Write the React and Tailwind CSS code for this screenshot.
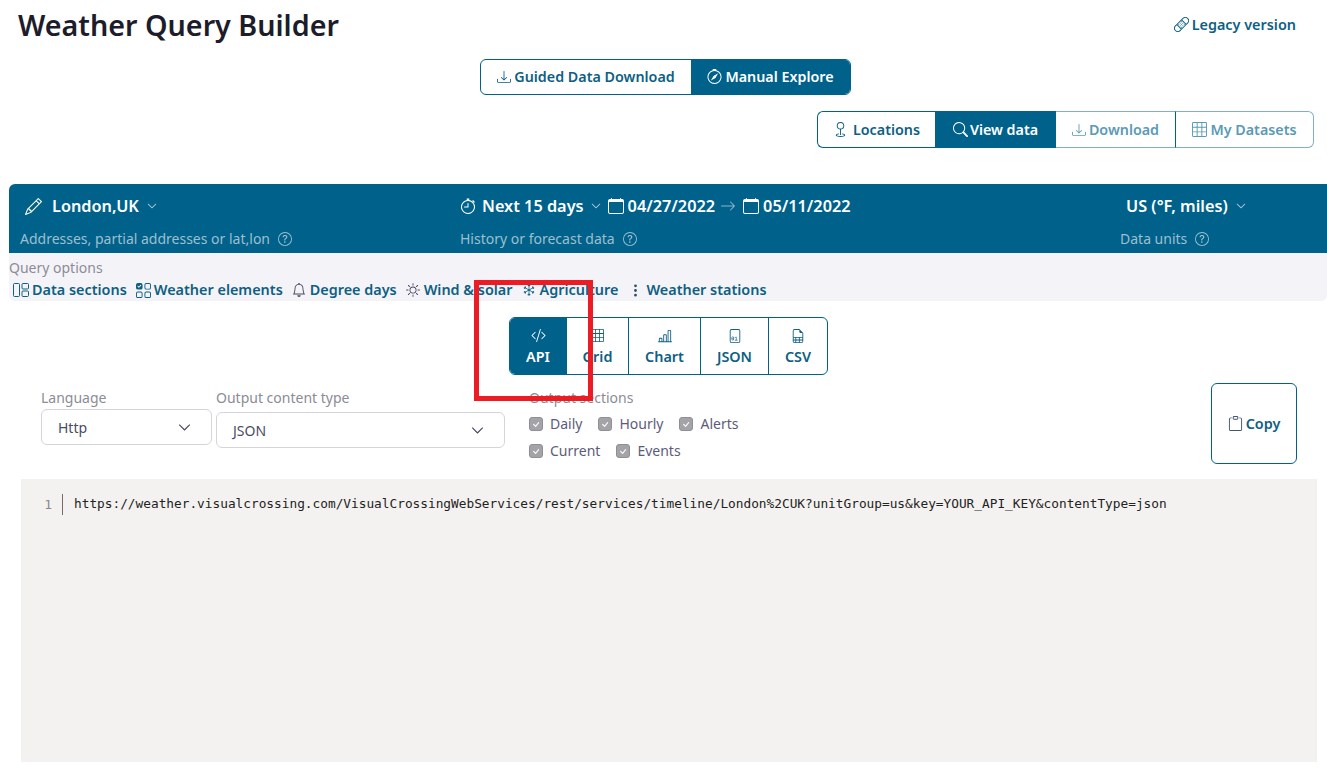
import React from "react";
import {
  BsBandaid, BsDownload, BsCompass, BsGeo, BsSearch, BsGrid3X3, BsPencil, BsChevronDown,
  BsQuestionCircle, BsStopwatch, BsCalendar, BsArrowRight, BsUiChecksGrid, BsBell, BsSun,
  BsSnow, BsThreeDotsVertical, BsCodeSlash, BsBarChartLine, BsFileBinary, BsFileEarmarkSpreadsheet, BsClipboard, BsCheck,
} from "react-icons/bs";

const SectionsIcon = () => (
  <svg width="16" height="16" viewBox="0 0 16 16" fill="none" stroke="currentColor" strokeWidth="1">
    <rect x="0.5" y="1.5" width="6" height="13" rx="1" />
    <rect x="9" y="1.5" width="6.5" height="5.5" rx="1" />
    <rect x="9" y="9" width="6.5" height="5.5" rx="1" />
  </svg>
);

const Check = ({ label }) => (
  <span className="flex items-center">
    <span className="w-[14px] h-[14px] rounded-[3px] bg-[#a3a3a8] border border-[#8f8f94] flex items-center justify-center text-white">
      <BsCheck size={13} />
    </span>
    <span className="ml-[7px] text-[14px] leading-[20px] text-[#5c5c7a]">{label}</span>
  </span>
);

const Select = ({ value, className }) => (
  <div className={`h-[36px] bg-white border border-[#d4d4de] rounded-[6px] flex items-center justify-between pl-4 pr-[20px] text-[14px] text-[#4b4b63] ${className}`}>
    <span>{value}</span>
    <BsChevronDown size={13} className="text-[#45455c] stroke-[0.6px]" />
  </div>
);

const Opt = ({ icon, label, className = "" }) => (
  <span className={`flex items-center gap-[3px] ${className}`}>
    {icon}
    <span>{label}</span>
  </span>
);

const Tab = ({ icon, label, active, className }) => (
  <div className={`flex flex-col items-center justify-center h-full ${className} ${active ? "bg-[#00628b] text-white" : "text-[#0e5f83] border-l border-[#00628b]"}`}>
    <span className="h-[16px] mt-[2px] flex items-center">{icon}</span>
    <span className="mt-[3px] text-[14.4px] leading-[20px] font-semibold">{label}</span>
  </div>
);

export default function App() {
  return (
    <div className="relative w-[1327px] h-[777px] overflow-hidden bg-white font-['Noto_Sans',sans-serif]">
      <div className="flex items-center justify-between pl-[18px] pr-[31px] h-[49px]">
        <h1 className="text-[28.7px] leading-[38px] font-semibold text-[#1c1c2b]">Weather Query Builder</h1>
        <a className="flex items-center gap-[3px] text-[14.4px] font-semibold text-[#0e5f83]">
          <BsBandaid size={15} /> Legacy version
        </a>
      </div>

      <div className="flex justify-center mt-[10px] pl-[3px]">
        <div className="flex h-[36px] w-[371px] border border-[#00628b] rounded-[6px] overflow-hidden text-[14.3px] leading-[20px] font-semibold">
          <div className="w-[210px] pb-[1px] pl-[1px] flex items-center justify-center gap-[3px] text-[#0e5f83]">
            <BsDownload size={14} /> Guided Data Download
          </div>
          <div className="flex-1 pb-[1px] pl-[1px] bg-[#00628b] text-white flex items-center justify-center gap-[3px]">
            <BsCompass size={15} /> Manual Explore
          </div>
        </div>
      </div>

      <div className="flex justify-end mt-[16px] pr-[13px]">
        <div className="flex h-[37px] w-[497px] text-[14.3px] font-semibold">
          <div className="w-[118px] flex items-center justify-center gap-[5px] text-[#0e5f83] border-y border-l border-[#00628b] rounded-l-[6px]">
            <BsGeo size={15} /> Locations
          </div>
          <div className="w-[121px] bg-[#00628b] text-white flex items-center justify-center gap-[2px]">
            <BsSearch size={15} /> View data
          </div>
          <div className="w-[120px] flex items-center justify-center gap-[3px] text-[#5b9ab5] border-y border-[#00628b80] border-r-[#00628b] border-r">
            <BsDownload size={14} /> Download
          </div>
          <div className="flex-1 flex items-center justify-center gap-[3px] text-[#5b9ab5] border-y border-r border-[#00628b80] rounded-r-[6px]">
            <BsGrid3X3 size={15} /> My Datasets
          </div>
        </div>
      </div>

      <div className="ml-[9px] mt-[36px] h-[69px] bg-[#00628b] rounded-tl-[6px] grid grid-cols-[440px_660px_1fr] pl-[11px] text-white">
        <div>
          <div className="flex items-center h-[22px] mt-[11px] pl-[5px] text-[16.3px] font-semibold">
            <BsPencil size={17} />
            <span className="ml-[10px]">London,UK</span>
            <BsChevronDown size={10} className="ml-[8px] stroke-[0.4px] text-[#d5e4ea]" />
          </div>
          <div className="flex items-center mt-[12px] text-[14px] leading-[19px] text-[#9dbfcf]">
            Addresses, partial addresses or lat,lon
            <BsQuestionCircle size={14} className="ml-[8px]" />
          </div>
        </div>
        <div>
          <div className="flex items-center h-[22px] mt-[11px] text-[16.3px] font-semibold">
            <BsStopwatch size={16} />
            <span className="ml-[6px]">Next 15 days</span>
            <BsChevronDown size={10} className="ml-[7px] stroke-[0.4px] text-[#d5e4ea]" />
            <BsCalendar size={16} className="ml-[7px]" />
            <span className="ml-[4px]">04/27/2022</span>
            <BsArrowRight size={16} className="ml-[5px] text-[#8fb4c6]" />
            <BsCalendar size={16} className="ml-[7px]" />
            <span className="ml-[4px]">05/11/2022</span>
          </div>
          <div className="flex items-center mt-[12px] text-[14px] leading-[19px] text-[#9dbfcf]">
            History or forecast data
            <BsQuestionCircle size={14} className="ml-[8px]" />
          </div>
        </div>
        <div>
          <div className="flex items-center h-[22px] mt-[11px] pl-[6px] text-[16.3px] font-semibold">
            <span>US (°F, miles)</span>
            <BsChevronDown size={10} className="ml-[8px] stroke-[0.4px] text-[#d5e4ea]" />
          </div>
          <div className="flex items-center mt-[12px] text-[14px] leading-[19px] text-[#9dbfcf]">
            Data units
            <BsQuestionCircle size={14} className="ml-[8px]" />
          </div>
        </div>
      </div>

      <div className="ml-[9px] h-[48px] bg-[#f4f4f8] rounded-b-[6px]">
        <div className="pt-[5px] text-[14px] leading-[19px] text-[#8c8c96]">Query options</div>
        <div className="flex items-center mt-[3px] pl-[4px] text-[14.4px] leading-[20px] font-semibold text-[#0e5f83]">
          <Opt icon={<SectionsIcon />} label="Data sections" />
          <Opt icon={<BsUiChecksGrid size={15} />} label="Weather elements" className="ml-[9px]" />
          <Opt icon={<BsBell size={14} className="text-[#45455c]" />} label="Degree days" className="ml-[9px] gap-[4px]" />
          <Opt icon={<BsSun size={14} className="text-[#45455c]" />} label="Wind & solar" className="ml-[9px] gap-[4px]" />
          <Opt icon={<BsSnow size={12} />} label="Agriculture" className="ml-[10px] gap-[5px]" />
          <Opt icon={<BsThreeDotsVertical size={15} className="text-[#2c4f62]" />} label="Weather stations" className="ml-[10px] gap-[2px]" />
        </div>
      </div>

      <div className="flex justify-center mt-[16px] pl-[10px]">
        <div className="flex h-[58px] w-[319px] border border-[#00628b] rounded-[6px] overflow-hidden">
          <Tab active className="w-[56px]" icon={<BsCodeSlash size={15} />} label="API" />
          <Tab className="w-[62px]" icon={<BsGrid3X3 size={13} />} label="Grid" />
          <Tab className="w-[72px]" icon={<BsBarChartLine size={14} />} label="Chart" />
          <Tab className="w-[68px]" icon={<BsFileBinary size={14} />} label="JSON" />
          <Tab className="flex-1" icon={<BsFileEarmarkSpreadsheet size={14} />} label="CSV" />
        </div>
      </div>

      <div className="flex items-start h-[96px] mt-[8px] pl-[41px]">
        <div className="w-[171px]">
          <div className="mt-[5px] text-[14px] leading-[19px] text-[#8c8c96]">Language</div>
          <Select value="Http" className="mt-[2px]" />
        </div>
        <div className="w-[289px] ml-[4px]">
          <div className="mt-[5px] text-[14px] leading-[19px] text-[#8c8c96]">Output content type</div>
          <Select value="JSON" className="mt-[5px]" />
        </div>
        <div className="ml-[24px] w-[682px]">
          <div className="mt-[5px] text-[14px] leading-[19px] text-[#8c8c96]">Output sections</div>
          <div className="flex mt-[7px] gap-[16px]">
            <Check label="Daily" />
            <Check label="Hourly" />
            <Check label="Alerts" />
          </div>
          <div className="flex mt-[7px] gap-[16px]">
            <Check label="Current" />
            <Check label="Events" />
          </div>
        </div>
        <div className="w-[86px] h-[81px] flex items-center justify-center gap-[3px] border border-[#00628b] rounded-[6px] text-[14.4px] font-semibold text-[#0e5f83]">
          <BsClipboard size={15} className="text-[#45556c]" /> Copy
        </div>
      </div>

      <div className="ml-[21px] w-[1296px] h-[283px] bg-[#f4f2f0] flex items-start pt-[15px] font-['DejaVu_Sans_Mono',monospace]">
        <div className="w-[42px] h-[21px] border-r border-[#7c6a6a] pr-[10px] text-right text-[13px] leading-[21px] text-[#8a8a8a]">1</div>
        <div className="pl-[11px] text-[12.79px] leading-[20px] text-[#222] whitespace-nowrap">
          https://weather.visualcrossing.com/VisualCrossingWebServices/rest/services/timeline/London%2CUK?unitGroup=us&amp;key=YOUR_API_KEY&amp;contentType=json
        </div>
      </div>

      <div className="absolute left-[474px] top-[280px] w-[119px] h-[121px] border-[5px] border-[#ed1c24] pointer-events-none" />
    </div>
  );
}
